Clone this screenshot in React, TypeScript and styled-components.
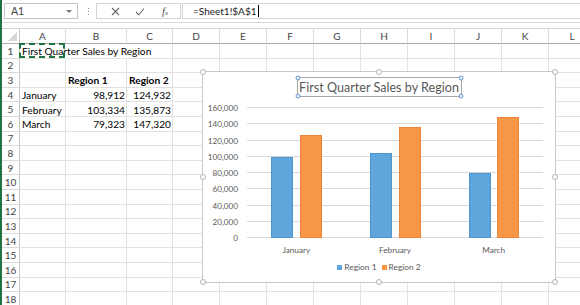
import styled, { createGlobalStyle } from "styled-components";

const GlobalStyle = createGlobalStyle`
  html, body {
    margin: 0;
    padding: 0;
    background: #fff;
  }
  body {
    font-family: Lato, "Liberation Sans", sans-serif;
  }
`;

const COLS = ["A", "B", "C", "D", "E", "F", "G", "H", "I", "J", "K", "L"];
const ROW_COUNT = 19;

type CellData = { v: string; right?: boolean; bold?: boolean };

const cells: Record<string, CellData> = {
  A1: { v: "First Quarter Sales by Region" },
  B3: { v: "Region 1", bold: true },
  C3: { v: "Region 2", bold: true },
  A4: { v: "January" },
  B4: { v: "98,912", right: true },
  C4: { v: "124,932", right: true },
  A5: { v: "February" },
  B5: { v: "103,334", right: true },
  C5: { v: "135,873", right: true },
  A6: { v: "March" },
  B6: { v: "79,323", right: true },
  C6: { v: "147,320", right: true },
};

// text from A1 runs over these, so their right gridline is hidden
const overflowCells = ["A1", "B1"];

const sales = [
  { month: "January", r1: 98912, r2: 124932 },
  { month: "February", r1: 103334, r2: 135873 },
  { month: "March", r1: 79323, r2: 147320 },
];

const Window = styled.div`
  width: 580px;
  height: 305px;
  box-sizing: border-box;
  border-left: 2px solid #217346;
  overflow: hidden;
  display: flex;
  flex-direction: column;
  background: #fff;
`;

const FormulaBar = styled.div`
  height: 22px;
  flex: none;
  display: flex;
  align-items: center;
  padding-left: 2px;
  border-bottom: 1px solid #dadada;
  font-size: 10.5px;
`;

const NameBox = styled.div`
  width: 74px;
  height: 16px;
  box-sizing: border-box;
  border: 1px solid #c6c6c6;
  display: flex;
  align-items: center;
  justify-content: space-between;
  padding: 0 5px 0 6px;
  color: #444;
`;

const Caret = styled.span`
  width: 0;
  height: 0;
  border-left: 3px solid transparent;
  border-right: 3px solid transparent;
  border-top: 3px solid #777;
`;

const Dots = styled.div`
  margin-left: 10px;
  display: flex;
  flex-direction: column;
  gap: 2px;

  span {
    width: 1px;
    height: 1px;
    background: #999;
  }
`;

const IconGroup = styled.div`
  margin-left: 7px;
  width: 85px;
  height: 16px;
  box-sizing: border-box;
  border: 1px solid #d4d4d4;
  display: flex;
  align-items: center;
  padding-left: 13px;
  gap: 15px;
  color: #555;
`;

const IconSlot = styled.span`
  width: 10px;
  height: 10px;
  display: flex;
  align-items: center;
  justify-content: center;
`;

const Fx = styled.span`
  font-family: "Liberation Serif", serif;
  font-style: italic;
  font-size: 11px;
  color: #555;
  line-height: 1;

  small {
    font-size: 7px;
  }
`;

const FormulaInput = styled.div`
  flex: 1;
  height: 16px;
  box-sizing: border-box;
  border: 1px solid #d4d4d4;
  border-right: none;
  margin-left: 1px;
  padding-left: 10px;
  display: flex;
  align-items: center;
  color: #222;
  font-size: 10px;
`;

const Cursor = styled.span`
  width: 1px;
  height: 12px;
  background: #000;
  margin-left: 1px;
`;

const Sheet = styled.div`
  position: relative;
  margin-top: 5px;
  display: grid;
  grid-template-columns: 18px 46px 61px 46px repeat(9, 47px);
  grid-template-rows: 15px repeat(${ROW_COUNT}, 14.6px);
  border-top: 1px solid #d4d4d4;
`;

const Corner = styled.div`
  box-sizing: border-box;
  border-right: 1px solid #c6c6c6;
  border-bottom: 1px solid #ababab;
  display: flex;
  align-items: flex-end;
  justify-content: flex-end;
  padding: 0 2px 2px 0;
`;

const ColHeader = styled.div`
  box-sizing: border-box;
  border-right: 1px solid #dadada;
  border-bottom: 1px solid #ababab;
  display: flex;
  align-items: center;
  justify-content: center;
  font-size: 10px;
  color: #444;
`;

const RowHeader = styled.div`
  box-sizing: border-box;
  border-right: 1px solid #c6c6c6;
  border-bottom: 1px solid #dadada;
  display: flex;
  align-items: center;
  justify-content: center;
  font-size: 10px;
  color: #444;
`;

const Cell = styled.div<{ $right?: boolean; $bold?: boolean; $noRight?: boolean; $selected?: boolean }>`
  position: relative;
  box-sizing: border-box;
  border-right: 1px solid ${(p) => (p.$noRight ? "transparent" : "#e1e1e1")};
  border-bottom: 1px solid #e1e1e1;
  display: flex;
  align-items: center;
  justify-content: ${(p) => (p.$right ? "flex-end" : "flex-start")};
  padding: 1px ${(p) => (p.$right ? "1px" : "2px")} 0 2px;
  font-size: 10.2px;
  font-weight: ${(p) => (p.$bold ? 700 : 400)};
  color: #000;
  white-space: nowrap;
  overflow: visible;

  ${(p) =>
    p.$selected &&
    `
    &::after {
      content: "";
      position: absolute;
      top: -1px;
      left: -1px;
      right: 0;
      bottom: 0;
      border: 2px dashed #217346;
    }
  `}
`;

const ChartBox = styled.div`
  position: absolute;
  top: 42px;
  left: 200px;
  width: 354px;
  height: 212px;
  box-sizing: border-box;
  border: 1px solid #c8c8c8;
  background: #fff;
  display: flex;
  flex-direction: column;
  align-items: center;
  padding-top: 5px;
`;

const Handle = styled.span<{ $x: string; $y: string; $title?: boolean }>`
  position: absolute;
  left: ${(p) => p.$x};
  top: ${(p) => p.$y};
  width: ${(p) => (p.$title ? 5 : 6)}px;
  height: ${(p) => (p.$title ? 5 : 6)}px;
  border-radius: 50%;
  transform: translate(-50%, -50%);
  box-sizing: border-box;
  border: 1px solid ${(p) => (p.$title ? "#6a9ccd" : "#b3b3b3")};
  background: ${(p) => (p.$title ? "#e3eef8" : "#fff")};
`;

const TitleBox = styled.div`
  position: relative;
  width: 165px;
  height: 20px;
  box-sizing: border-box;
  border: 1px solid #a6a6a6;
  display: flex;
  align-items: center;
  justify-content: center;
  font-size: 12.6px;
  color: #595959;
  white-space: nowrap;
`;

const Plot = styled.svg`
  display: block;
  flex: none;
`;

const Legend = styled.div`
  margin-top: 2px;
  height: 12px;
  display: flex;
  align-items: center;
  gap: 5px;
  font-size: 8.4px;
  color: #595959;
`;

const LegendItem = styled.div`
  display: flex;
  align-items: center;
  gap: 2px;
`;

const Swatch = styled.span<{ $color: string }>`
  width: 5px;
  height: 5px;
  background: ${(p) => p.$color};
`;

const BLUE = "#5fa6dc";
const BLUE_EDGE = "#4f96d0";
const ORANGE = "#f79646";
const ORANGE_EDGE = "#ef8438";
const LABEL_FONT = "Lato, 'Liberation Sans', sans-serif";

const PLOT_W = 352;
const PLOT_H = 162;
const X0 = 44;
const X1 = 340;
const ZERO_Y = 140;
const TOP_Y = 10;
const MAX = 160000;

const yOf = (v: number) => ZERO_Y - (v / MAX) * (ZERO_Y - TOP_Y);

const ChartPlot = () => {
  const ticks = Array.from({ length: 9 }, (_, i) => i * 20000);
  const band = (X1 - X0) / sales.length;
  return (
    <Plot width={PLOT_W} height={PLOT_H} viewBox={`0 0 ${PLOT_W} ${PLOT_H}`}>
      {ticks.map((t) => {
        const y = Math.round(yOf(t)) + 0.5;
        return (
          <g key={t}>
            <line x1={X0} x2={X1} y1={y} y2={y} stroke="#d9d9d9" strokeWidth={1} />
            <text x={35} y={y + 3} textAnchor="end" fontSize={8.2} fill="#595959" fontFamily={LABEL_FONT}>
              {t.toLocaleString("en-US")}
            </text>
          </g>
        );
      })}
      {sales.map((s, i) => {
        const c = X0 + band * (i + 0.5);
        const y1 = yOf(s.r1);
        const y2 = yOf(s.r2);
        return (
          <g key={s.month}>
            <rect
              x={Math.round(c - 25) + 0.5}
              y={Math.round(y1) + 0.5}
              width={21}
              height={ZERO_Y - Math.round(y1)}
              fill={BLUE}
              stroke={BLUE_EDGE}
            />
            <rect
              x={Math.round(c + 3.5) + 0.5}
              y={Math.round(y2) + 0.5}
              width={21}
              height={ZERO_Y - Math.round(y2)}
              fill={ORANGE}
              stroke={ORANGE_EDGE}
            />
            <text x={c} y={156} textAnchor="middle" fontSize={8.2} fill="#595959" fontFamily={LABEL_FONT}>
              {s.month}
            </text>
          </g>
        );
      })}
    </Plot>
  );
};

const Chart = () => (
  <ChartBox>
    <Handle $x="0%" $y="0%" />
    <Handle $x="50%" $y="0%" />
    <Handle $x="100%" $y="0%" />
    <Handle $x="0%" $y="50%" />
    <Handle $x="100%" $y="50%" />
    <Handle $x="0%" $y="100%" />
    <Handle $x="50%" $y="100%" />
    <Handle $x="100%" $y="100%" />
    <TitleBox>
      First Quarter Sales by Region
      <Handle $title $x="0%" $y="0%" />
      <Handle $title $x="100%" $y="0%" />
      <Handle $title $x="0%" $y="100%" />
      <Handle $title $x="100%" $y="100%" />
    </TitleBox>
    <ChartPlot />
    <Legend>
      <LegendItem>
        <Swatch $color={BLUE} />
        Region 1
      </LegendItem>
      <LegendItem>
        <Swatch $color={ORANGE} />
        Region 2
      </LegendItem>
    </Legend>
  </ChartBox>
);

export default function App() {
  const rows = Array.from({ length: ROW_COUNT }, (_, i) => i + 1);
  return (
    <>
      <GlobalStyle />
      <Window>
        <FormulaBar>
          <NameBox>
            A1
            <Caret />
          </NameBox>
          <Dots>
            <span />
            <span />
            <span />
          </Dots>
          <IconGroup>
            <IconSlot>
              <svg width="9" height="9" viewBox="0 0 9 9">
                <path d="M1 1L8 8M8 1L1 8" stroke="#666" strokeWidth="1.1" fill="none" />
              </svg>
            </IconSlot>
            <IconSlot>
              <svg width="10" height="9" viewBox="0 0 10 9">
                <path d="M1 5L3.8 7.8L9 1.5" stroke="#666" strokeWidth="1.1" fill="none" />
              </svg>
            </IconSlot>
            <IconSlot>
              <Fx>
                f<small>x</small>
              </Fx>
            </IconSlot>
          </IconGroup>
          <FormulaInput>
            =Sheet1!$A$1
            <Cursor />
          </FormulaInput>
        </FormulaBar>
        <Sheet>
          <Corner>
            <svg width="9" height="9" viewBox="0 0 9 9">
              <polygon points="9,0 9,9 0,9" fill="#d6d6d6" />
            </svg>
          </Corner>
          {COLS.map((c) => (
            <ColHeader key={c}>{c}</ColHeader>
          ))}
          {rows.map((r) => [
            <RowHeader key={`h${r}`}>{r}</RowHeader>,
            ...COLS.map((c) => {
              const id = `${c}${r}`;
              const d = cells[id];
              return (
                <Cell
                  key={id}
                  $right={d?.right}
                  $bold={d?.bold}
                  $noRight={overflowCells.includes(id)}
                  $selected={id === "A1"}
                >
                  {d?.v}
                </Cell>
              );
            }),
          ])}
          <Chart />
        </Sheet>
      </Window>
    </>
  );
}
